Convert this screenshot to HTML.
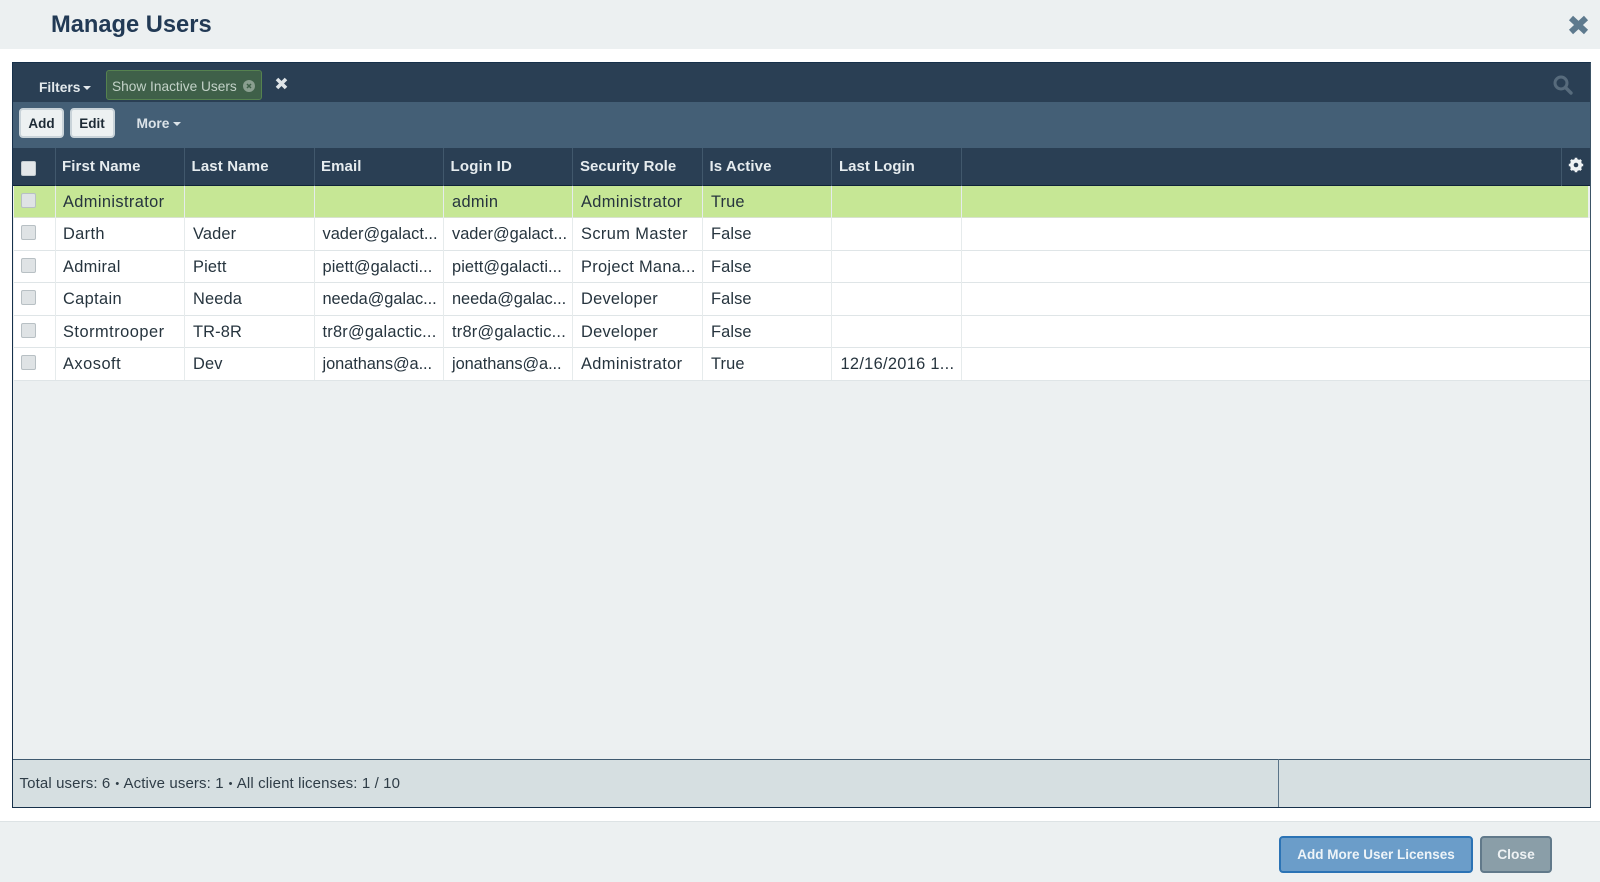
<!DOCTYPE html>
<html><head><meta charset="utf-8"><title>Manage Users</title>
<style>
html,body{margin:0;padding:0;width:1600px;height:882px;overflow:hidden;background:#fff;font-family:"Liberation Sans",Arial,sans-serif}
div,span{position:absolute;box-sizing:border-box;white-space:nowrap}
svg{position:absolute;display:block}
.th{top:148px;height:38px;line-height:37px;font-size:15px;font-weight:bold;color:#e6ecef;letter-spacing:.1px}
.vh{top:148px;width:1px;height:38px;background:#41586c}
.vr{top:186px;width:1px;height:194px;background:#e6ebec}
.r{left:14px;width:1576px;height:32.4px;background:#fff;border-bottom:1px solid #dfe5e7}
.t{font-size:16.4px;line-height:33px;height:32px;top:0;color:#26343e;letter-spacing:.15px}
.cb{left:6.700px;top:7px;width:15px;height:15px;background:#dfe3e5;border:1px solid #b8c0c4;border-radius:2px}
.btn{top:108px;height:30px;background:#edf1f2;border:2px solid #c9d3d9;border-radius:4px;font-size:13.500px;font-weight:bold;line-height:27px;text-align:center;color:#1d2a35}
b.d{font-size:11px;font-weight:normal;position:relative;top:-1px;margin:0 .7px}
</style></head><body>
<div style="left:0;top:0;width:1600px;height:49px;background:#ecf0f1"></div>
<div style="left:51px;top:9px;font-size:23.700px;line-height:32px;font-weight:bold;color:#223a55">Manage Users</div>
<svg style="left:1568px;top:14.500px" width="21" height="20" viewBox="0 0 21 20"><path d="M3 3L18 17M18 3L3 17" stroke="#5e7a8e" stroke-width="6" fill="none"/></svg>

<div style="left:12px;top:62px;width:1579px;height:746px;background:#ecf0f1;border:1px solid #16304a;border-right-color:#3d5366"></div>
<div style="left:13px;top:63px;width:1577px;height:39px;background:#2a3f54"></div>
<div style="left:39px;top:78px;font-size:13.800px;line-height:20px;font-weight:bold;color:#e3e9ec">Filters</div>
<svg style="left:83px;top:86px" width="8" height="5"><path d="M0 0H8L4 4Z" fill="#e3e9ec"/></svg>
<div style="left:106px;top:70px;width:155.500px;height:30px;background:#3f6049;border:1px solid #55824f;border-radius:3px"></div>
<div style="left:112px;top:77px;font-size:13.700px;line-height:20px;color:#c3d2c8">Show Inactive Users</div>
<svg style="left:243px;top:80px" width="12" height="12" viewBox="0 0 12 12"><circle cx="6" cy="6" r="6" fill="#8a9f90"/><path d="M4 4L8 8M8 4L4 8" stroke="#3f6049" stroke-width="1.500"/></svg>
<svg style="left:275px;top:77px" width="13" height="13" viewBox="0 0 13 13"><path d="M2 2L11 11M11 2L2 11" stroke="#dfe5e8" stroke-width="3.600" fill="none"/></svg>
<svg style="left:1552px;top:74px" width="22" height="22" viewBox="0 0 22 22"><circle cx="9" cy="9" r="6" stroke="#576b7c" stroke-width="3" fill="none"/><path d="M13.500 13.500L19 19" stroke="#576b7c" stroke-width="3.400" stroke-linecap="round"/></svg>

<div style="left:13px;top:102px;width:1577px;height:46px;background:#445f76"></div>
<div class="btn" style="left:19px;width:45px">Add</div>
<div class="btn" style="left:69.500px;width:45px">Edit</div>
<div style="left:136.500px;top:114px;font-size:13.800px;line-height:20px;font-weight:bold;color:#dbe3e8">More</div>
<svg style="left:173px;top:122px" width="8" height="5"><path d="M0 0H8L4 4Z" fill="#dbe3e8"/></svg>

<div style="left:13px;top:148px;width:1577px;height:38px;background:#2a3f54;border-bottom:1px solid #0f2338"></div>
<div style="left:21px;top:161px;width:15px;height:15px;background:#e3e7e9;border:1px solid #c3cbcf;border-radius:2px"></div>
<div class="vh" style="left:55px"></div><div class="vh" style="left:184px"></div><div class="vh" style="left:314px"></div><div class="vh" style="left:443px"></div><div class="vh" style="left:572px"></div><div class="vh" style="left:702px"></div><div class="vh" style="left:831px"></div><div class="vh" style="left:961px"></div><div class="vh" style="left:1561px"></div>
<div class="th" style="left:62px">First Name</div>
<div class="th" style="left:191.500px;letter-spacing:.15px">Last Name</div>
<div class="th" style="left:321px">Email</div>
<div class="th" style="left:450.500px;letter-spacing:.2px">Login ID</div>
<div class="th" style="left:580px;letter-spacing:.03px">Security Role</div>
<div class="th" style="left:709.500px">Is Active</div>
<div class="th" style="left:839px;letter-spacing:0">Last Login</div>
<svg style="left:1568px;top:157px" width="16" height="16" viewBox="0 0 16 16"><circle cx="8" cy="8" r="4.500" fill="none" stroke="#eef2f4" stroke-width="3"/><path d="M8 .8V15.200M.8 8H15.200M2.900 2.900L13.100 13.100M13.100 2.900L2.900 13.100" stroke="#eef2f4" stroke-width="2.600"/><circle cx="8" cy="8" r="2.300" fill="#2a3f54"/></svg>

<div class="r" style="top:186px;background:#c6e795;border-bottom-color:#d8e2cf;width:1574px"><div class="cb"></div><div class="t" style="left:49px;letter-spacing:.38px">Administrator</div><div class="t" style="left:438px;letter-spacing:.35px">admin</div><div class="t" style="left:567px;letter-spacing:.38px">Administrator</div><div class="t" style="left:697px">True</div></div>
<div class="r" style="top:218.400px"><div class="cb"></div><div class="t" style="left:49px;letter-spacing:.35px">Darth</div><div class="t" style="left:179px">Vader</div><div class="t" style="left:308.500px;letter-spacing:0">vader@galact...</div><div class="t" style="left:438px;letter-spacing:0">vader@galact...</div><div class="t" style="left:567px;letter-spacing:.4px">Scrum Master</div><div class="t" style="left:697px;letter-spacing:.1px">False</div></div>
<div class="r" style="top:250.800px"><div class="cb"></div><div class="t" style="left:49px;letter-spacing:.3px">Admiral</div><div class="t" style="left:179px">Piett</div><div class="t" style="left:308.500px;letter-spacing:.08px">piett@galacti...</div><div class="t" style="left:438px;letter-spacing:.08px">piett@galacti...</div><div class="t" style="left:567px;letter-spacing:.3px">Project Mana...</div><div class="t" style="left:697px;letter-spacing:.1px">False</div></div>
<div class="r" style="top:283.200px"><div class="cb"></div><div class="t" style="left:49px;letter-spacing:.35px">Captain</div><div class="t" style="left:179px">Needa</div><div class="t" style="left:308.500px;letter-spacing:-.07px">needa@galac...</div><div class="t" style="left:438px;letter-spacing:-.07px">needa@galac...</div><div class="t" style="left:567px;letter-spacing:.25px">Developer</div><div class="t" style="left:697px;letter-spacing:.1px">False</div></div>
<div class="r" style="top:315.600px"><div class="cb"></div><div class="t" style="left:49px;letter-spacing:.49px">Stormtrooper</div><div class="t" style="left:179px">TR-8R</div><div class="t" style="left:308.500px;letter-spacing:.22px">tr8r@galactic...</div><div class="t" style="left:438px;letter-spacing:.22px">tr8r@galactic...</div><div class="t" style="left:567px;letter-spacing:.25px">Developer</div><div class="t" style="left:697px;letter-spacing:.1px">False</div></div>
<div class="r" style="top:348px;height:33px"><div class="cb"></div><div class="t" style="left:49px;letter-spacing:.5px">Axosoft</div><div class="t" style="left:179px">Dev</div><div class="t" style="left:308.500px;letter-spacing:-.07px">jonathans@a...</div><div class="t" style="left:438px;letter-spacing:-.07px">jonathans@a...</div><div class="t" style="left:567px;letter-spacing:.38px">Administrator</div><div class="t" style="left:697px">True</div><div class="t" style="left:826.500px;letter-spacing:.3px">12/16/2016 1...</div></div>
<div class="vr" style="left:55px"></div><div class="vr" style="left:184px"></div><div class="vr" style="left:314px"></div><div class="vr" style="left:443px"></div><div class="vr" style="left:572px"></div><div class="vr" style="left:702px"></div><div class="vr" style="left:831px"></div><div class="vr" style="left:961px"></div>

<div style="left:13px;top:759px;width:1577px;height:48px;background:#d6dfe1;border-top:1px solid #3f5a70"></div>
<div style="left:1278px;top:759px;width:1px;height:48px;background:#5b7488"></div>
<div style="left:19.500px;top:773.500px;font-size:15px;line-height:20px;letter-spacing:.12px;color:#2f3d47">Total users: 6 <b class="d">•</b> Active users: 1 <b class="d">•</b> All client licenses: 1 / 10</div>

<div style="left:0;top:821px;width:1600px;height:61px;background:#ecf0f1;border-top:1px solid #dde3e5"></div>
<div style="left:1279px;top:836px;width:194px;height:37px;background:#6b9dc9;border:2px solid #2b73b5;border-radius:4px;font-size:13.500px;font-weight:bold;line-height:33px;text-align:center;color:#eef4f8">Add More User Licenses</div>
<div style="left:1480px;top:836px;width:72px;height:37px;background:#8a9ea8;border:2px solid #61798a;border-radius:4px;font-size:13.800px;font-weight:bold;line-height:33px;text-align:center;color:#eef2f4">Close</div>
</body></html>
